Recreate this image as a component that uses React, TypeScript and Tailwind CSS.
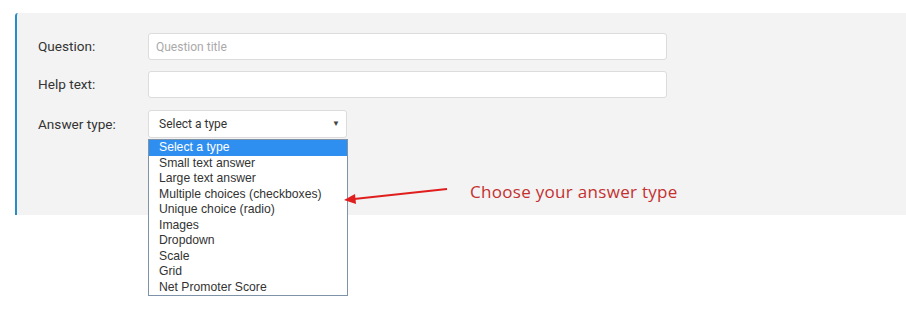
import React from "react";

const options = [
  "Select a type",
  "Small text answer",
  "Large text answer",
  "Multiple choices (checkboxes)",
  "Unique choice (radio)",
  "Images",
  "Dropdown",
  "Scale",
  "Grid",
  "Net Promoter Score",
];

export default function App() {
  return (
    <div className="relative w-[906px] h-[311px] bg-white overflow-hidden font-['Roboto',sans-serif]">
      <div className="ml-[15px] mt-[13px] h-[202px] bg-[#f3f3f3] border-l-2 border-[#2a8cc4] rounded-tl-[3px] pl-[21px] pt-[20px]">
        <div className="grid grid-cols-[110px_519px] gap-y-[11px] items-center text-[13.6px] text-[#333]">
          <label>Question:</label>
          <div className="h-[27px] bg-white border border-[#dcdcdc] rounded-[3px] flex items-center px-[7px] text-[12px] text-[#aaa]">
            Question title
          </div>
          <label>Help text:</label>
          <div className="h-[27px] bg-white border border-[#dcdcdc] rounded-[3px]" />
          <label className="mt-px">Answer type:</label>
          <div className="mt-px w-[199px] h-[28px] bg-white border border-[#dcdcdc] rounded-[3px] flex items-center justify-between pl-[10px] pr-[6px] text-[12px] text-[#333]">
            <span>Select a type</span>
            <span className="text-[8px] text-[#444]">▼</span>
          </div>
        </div>
      </div>

      {/* open select list */}
      <ul className="absolute left-[148px] top-[139px] w-[200px] bg-white border border-[#7f93a8] font-['Liberation_Sans',Arial,sans-serif] text-[12.2px] text-[#333]">
        {options.map((o, i) => (
          <li
            key={o}
            className={`h-[15.5px] leading-[15.5px] pl-[10px] ${i === 0 ? "bg-[#2f8ff0] text-white" : ""}`}
          >
            {o}
          </li>
        ))}
      </ul>

      {/* annotation */}
      <svg className="absolute left-[340px] top-[180px]" width="115" height="30" viewBox="0 0 115 30">
        <line x1="107" y1="9" x2="14" y2="19" stroke="#e01e1e" strokeWidth="2" />
        <polygon points="4,20 15,14 16,24" fill="#e01e1e" />
      </svg>
      <div className="absolute left-[470px] top-[179px] text-[17px] text-[#c43030] font-['Open_Sans',sans-serif] tracking-[0.3px]">
        Choose your answer type
      </div>
    </div>
  );
}
